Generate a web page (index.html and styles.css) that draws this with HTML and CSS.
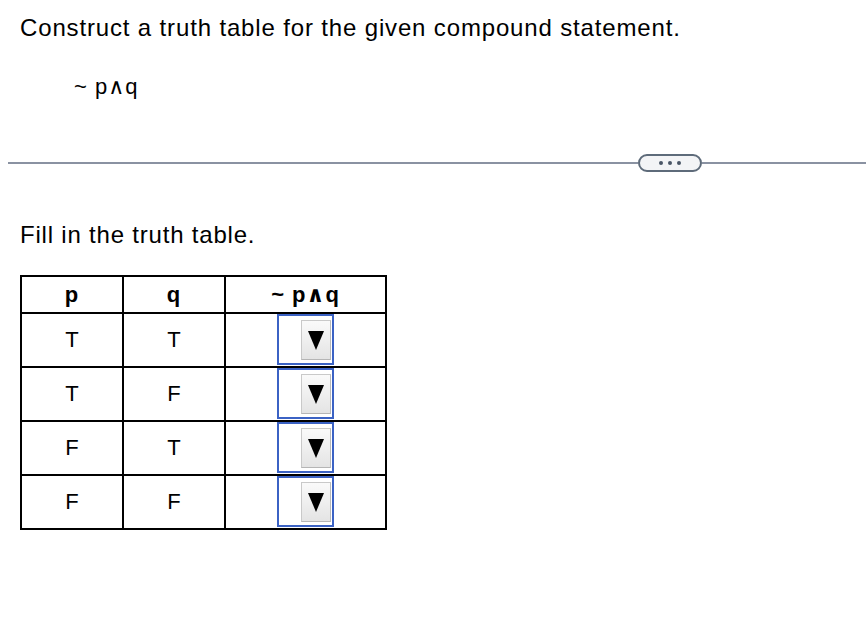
FILE: index.html
```html
<!DOCTYPE html>
<html>
<head>
<meta charset="utf-8">
<link rel="stylesheet" href="styles.css">
</head>
<body>
<div class="page">
  <p class="title">Construct a truth table for the given compound statement.</p>
  <p class="stmt">~ p<span class="and">∧</span>q</p>
  <div class="sep">
    <div class="line line-left"></div>
    <div class="pill"><span class="dot"></span><span class="dot"></span><span class="dot"></span></div>
    <div class="line line-right"></div>
  </div>
  <p class="fill">Fill in the truth table.</p>
  <table class="tt">
    <thead>
      <tr><th class="c1">p</th><th class="c2">q</th><th class="c3">~ p<span class="and">∧</span>q</th></tr>
    </thead>
    <tbody>
      <tr><td>T</td><td>T</td><td class="dd"><div class="select"><div class="btn"><span class="tri"></span></div></div></td></tr>
      <tr><td>T</td><td>F</td><td class="dd"><div class="select"><div class="btn"><span class="tri"></span></div></div></td></tr>
      <tr><td>F</td><td>T</td><td class="dd"><div class="select"><div class="btn"><span class="tri"></span></div></div></td></tr>
      <tr><td>F</td><td>F</td><td class="dd"><div class="select"><div class="btn"><span class="tri"></span></div></div></td></tr>
    </tbody>
  </table>
</div>
</body>
</html>
```
FILE: styles.css
```css
html, body {
  margin: 0;
  padding: 0;
  background: #ffffff;
}
body {
  font-family: "Liberation Sans", Arial, sans-serif;
  color: #000;
}
.page {
  padding: 0 0 0 8px;
}
.title {
  margin: 0;
  padding: 15px 0 0 12px;
  font-size: 24px;
  line-height: 26px;
  letter-spacing: 0.85px;
}
.stmt {
  margin: 0;
  padding: 0 0 0 66px;
  margin-top: 34px;
  font-size: 22px;
  line-height: 24px;
  letter-spacing: 1px;
}
.and {
  font-family: "DejaVu Sans", sans-serif;
  font-weight: normal;
  font-size: 1em;
  line-height: 0;
}
.tt th .and {
  font-weight: bold;
}
.sep {
  display: flex;
  align-items: center;
  margin-top: 55px;
  height: 18px;
}
.line {
  height: 1.5px;
  background: #8a92a2;
}
.line-left {
  width: 630px;
}
.line-right {
  flex: 1;
}
.pill {
  width: 60px;
  height: 14px;
  border: 2px solid #5e6b7a;
  border-radius: 9px;
  background: #f3f4f6;
  display: flex;
  align-items: center;
  justify-content: center;
  gap: 5px;
}
.dot {
  width: 4px;
  height: 4px;
  border-radius: 50%;
  background: #4a5566;
}
.fill {
  margin: 0;
  padding: 0 0 0 12px;
  margin-top: 50px;
  font-size: 24px;
  line-height: 26px;
  letter-spacing: 0.8px;
}
.tt {
  margin: 27px 0 0 12px;
  border-collapse: collapse;
  font-size: 22px;
}
.tt th, .tt td {
  border: 2px solid #000;
  text-align: center;
  padding: 0;
}
.tt th {
  height: 35px;
  font-weight: bold;
  font-size: 22px;
  letter-spacing: 1px;
}
.tt td {
  height: 52px;
}
.c1, .c2 {
  width: 100px;
}
.c3 {
  width: 159px;
}
.tt td.dd {
  vertical-align: top;
}
.select {
  width: 53px;
  height: 43px;
  margin: 0 auto;
  border: 2px solid #3b62c4;
  display: flex;
  justify-content: flex-end;
  align-items: flex-start;
  padding-top: 4px;
  box-sizing: content-box;
}
.btn {
  width: 28px;
  height: 38px;
  background: linear-gradient(#fafafa, #e4e4e4);
  border: 1px solid #c9c9c9;
  border-right-color: #bbb;
  border-bottom-color: #b5b5b5;
  margin-right: 1px;
  display: flex;
  align-items: center;
  justify-content: center;
}
.tri {
  width: 0;
  height: 0;
  border-left: 8px solid transparent;
  border-right: 8px solid transparent;
  border-top: 19px solid #000;
}
```
